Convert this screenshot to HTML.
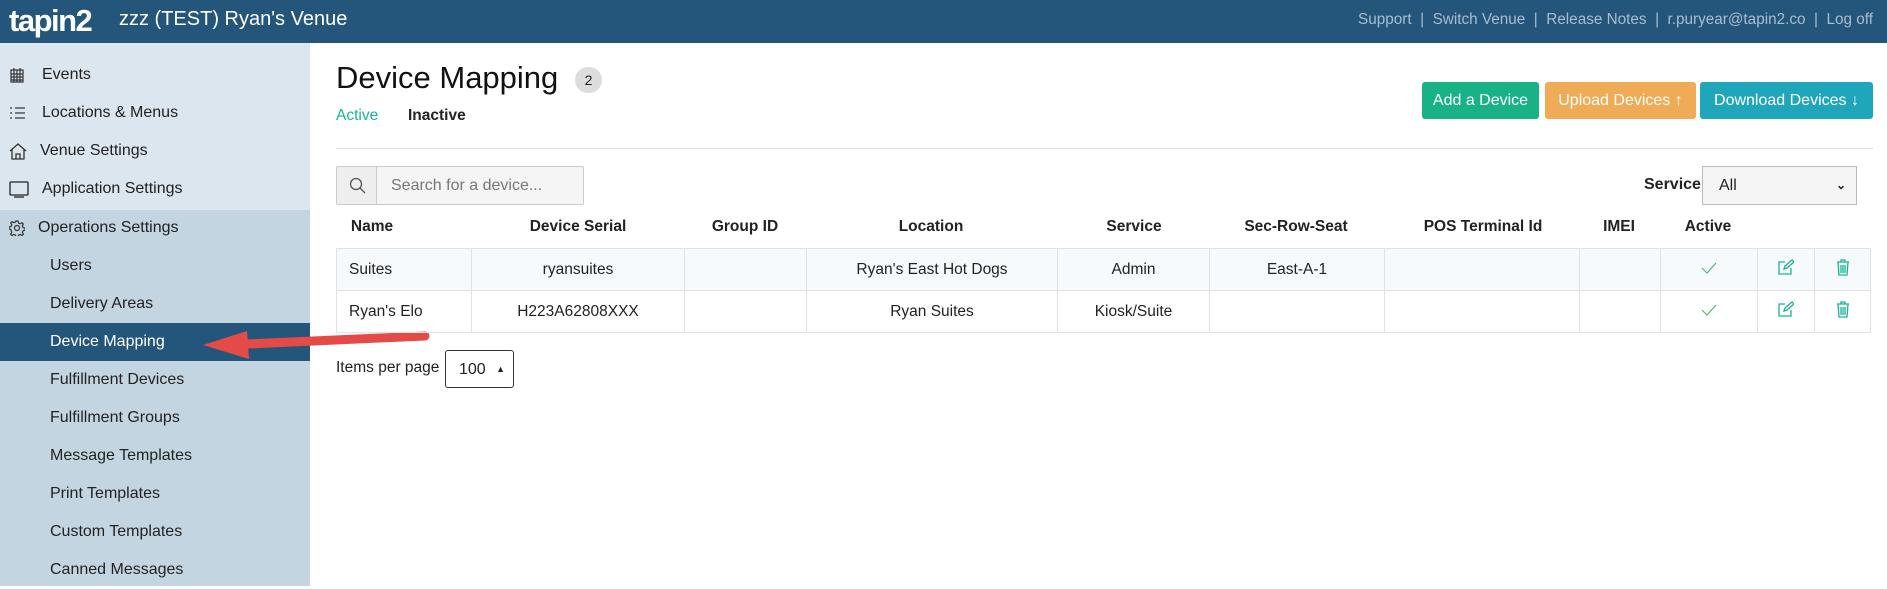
<!DOCTYPE html>
<html><head><meta charset="utf-8"><style>
*{box-sizing:border-box;margin:0;padding:0}
body{width:1887px;height:586px;overflow:hidden;font-family:"Liberation Sans",sans-serif;background:#fff;position:relative;color:#222}
.hdr{position:absolute;left:0;top:0;width:1887px;height:43px;background:#24557a}
.logo{position:absolute;left:9px;top:3px;color:#fff;font-weight:bold;font-size:31px;letter-spacing:-1.5px}
.venue{position:absolute;left:119px;top:8px;color:#fff;font-size:20px}
.links{position:absolute;right:14px;top:11px;color:#a9bdcf;font-size:15.3px}
.side{position:absolute;left:0;top:43px;width:310px;height:543px;background:#dce6ef}
.ops{position:absolute;left:0;top:210px;width:310px;height:376px;background:#c3d5e1}
.it{position:absolute;left:0;width:310px;height:38px;font-size:16px;line-height:38px;color:#222}
.it.sub{padding-left:50px}
.it.act{background:#24557a;color:#fff}
.ic{position:absolute;left:9px;top:11px}
.t{position:absolute;left:336px;top:60px;font-size:31px;color:#111}
.badge{position:absolute;left:575px;top:67px;width:27px;height:26px;border-radius:13px;background:#ddd;font-size:14px;text-align:center;line-height:26px}
.btn{position:absolute;top:82px;height:37px;color:#fff;font-size:16px;line-height:37px;text-align:center;border-radius:3px}
table{position:absolute;left:336px;top:248px;border-collapse:collapse;font-size:15.5px}
td{border:1px solid #e0e3e6;height:42px;text-align:center;color:#222}
.th{position:absolute;top:218px;font-weight:bold;font-size:15.5px;transform:translateX(-50%)}
</style></head><body>
<div class="hdr"><div class="logo">tapin2</div><div class="venue">zzz (TEST) Ryan's Venue</div>
<div class="links">Support &nbsp;|&nbsp; Switch Venue &nbsp;|&nbsp; Release Notes &nbsp;|&nbsp; r.puryear@tapin2.co &nbsp;|&nbsp; Log off</div></div>
<div class="side"></div><div class="ops"></div>
<div class="it" style="top:56px;padding-left:42px">Events<svg class="ic" width="16" height="16" viewBox="0 0 16 16" fill="none" stroke="#333" stroke-width="1.2"><rect x="2" y="3" width="12" height="12"/><path d="M2 7h12M2 10h12M2 13h12M5 3v12M8 3v12M11 3v12M5 1v3M11 1v3"/></svg></div>
<div class="it" style="top:94px;padding-left:42px">Locations &amp; Menus<svg class="ic" width="17" height="16" viewBox="0 0 17 16" fill="none" stroke="#555" stroke-width="1.6"><path d="M1 3h2M1 8h2M1 13h2M6 3h10M6 8h10M6 13h10"/></svg></div>
<div class="it" style="top:132px;padding-left:40px">Venue Settings<svg class="ic" width="18" height="17" viewBox="0 0 18 17" fill="none" stroke="#333" stroke-width="1.3"><path d="M1 8L9 1l8 7M3 6v10h12V6M7 16v-5h4v5"/></svg></div>
<div class="it" style="top:170px;padding-left:42px">Application Settings<svg class="ic" width="20" height="17" viewBox="0 0 20 17" fill="none" stroke="#222" stroke-width="1.3"><rect x="1" y="1" width="18" height="13" rx="1"/><path d="M5 16h10"/></svg></div>
<div class="it" style="top:209px;padding-left:38px">Operations Settings<svg class="ic" width="16" height="16" viewBox="0 0 16 16" fill="none" stroke="#333" stroke-width="1.2"><circle cx="8" cy="8" r="2.5"/><path d="M7 1h2l.5 2 1.7.8 1.8-1.1 1.4 1.4-1.1 1.8.8 1.7 2 .5v2l-2 .5-.8 1.7 1.1 1.8-1.4 1.4-1.800-1.1-1.7.8-.5 2H7l-.5-2-1.7-.8-1.8 1.1-1.4-1.4 1.1-1.8L1.9 9.5 0 9V7l2-.5.8-1.7L1.7 3l1.4-1.4 1.8 1.1L6.5 2z"/></svg></div>
<div class="it sub" style="top:247px">Users</div>
<div class="it sub" style="top:285px">Delivery Areas</div>
<div class="it sub act" style="top:323px">Device Mapping</div>
<div class="it sub" style="top:361px">Fulfillment Devices</div>
<div class="it sub" style="top:399px">Fulfillment Groups</div>
<div class="it sub" style="top:437px">Message Templates</div>
<div class="it sub" style="top:475px">Print Templates</div>
<div class="it sub" style="top:513px">Custom Templates</div>
<div class="it sub" style="top:551px">Canned Messages</div>
<svg style="position:absolute;left:195px;top:325px" width="240" height="40"><path d="M230 11L52 19" stroke="#e44b47" stroke-width="9" stroke-linecap="round"/><path d="M8 20L52 6 54 34z" fill="#e44b47"/></svg>
<div class="t">Device Mapping</div><div class="badge">2</div>
<div style="position:absolute;left:336px;top:107px;font-size:15.5px;color:#1ab394">Active</div>
<div style="position:absolute;left:408px;top:107px;font-size:15.5px;font-weight:bold">Inactive</div>
<div class="btn" style="left:1422px;width:117px;background:#19b287">Add a Device</div>
<div class="btn" style="left:1545px;width:151px;background:#f0ab56">Upload Devices ↑</div>
<div class="btn" style="left:1700px;width:173px;background:#20a6bb">Download Devices ↓</div>
<div style="position:absolute;left:336px;top:148px;width:1537px;height:1px;background:#ddd"></div>
<div style="position:absolute;left:336px;top:166px;width:248px;height:39px;border:1px solid #ccc;background:#f5f5f5;border-radius:2px">
<div style="position:absolute;left:0;top:0;width:40px;height:37px;border-right:1px solid #ccc;background:#eee"><svg style="position:absolute;left:12px;top:10px" width="17" height="17" fill="none" stroke="#555" stroke-width="1.3"><circle cx="7" cy="7" r="5.5"/><path d="M11 11l5 5"/></svg></div>
<div style="position:absolute;left:54px;top:10px;font-size:16px;color:#777">Search for a device...</div></div>
<div style="position:absolute;left:1644px;top:176px;font-weight:bold;font-size:16px">Service</div>
<div style="position:absolute;left:1702px;top:166px;width:155px;height:39px;border:1px solid #bbb;background:#f5f5f5;font-size:16px;line-height:37px;padding-left:16px">All<span style="position:absolute;right:10px;top:0;font-size:12px;font-weight:bold">&#8964;</span></div>
<div class="th" style="left:372px">Name</div><div class="th" style="left:578px">Device Serial</div><div class="th" style="left:745px">Group ID</div><div class="th" style="left:931px">Location</div><div class="th" style="left:1134px">Service</div><div class="th" style="left:1296px">Sec-Row-Seat</div><div class="th" style="left:1483px">POS Terminal Id</div><div class="th" style="left:1619px">IMEI</div><div class="th" style="left:1708px">Active</div>
<table><colgroup><col style="width:135px"><col style="width:213px"><col style="width:122px"><col style="width:251px"><col style="width:152px"><col style="width:175px"><col style="width:195px"><col style="width:81px"><col style="width:97px"><col style="width:57px"><col style="width:56px"></colgroup>
<tr style="background:#f7fafd"><td style="text-align:left;padding-left:12px">Suites</td><td>ryansuites</td><td></td><td>Ryan's East Hot Dogs</td><td>Admin</td><td>East-A-1</td><td></td><td></td><td><svg width="16" height="12" fill="none" stroke="#4cb87a" stroke-width="1.2"><path d="M1 6l5 5 9-10"/></svg></td><td><svg width="16" height="16" fill="none" stroke="#1ab394" stroke-width="1.3"><path d="M13 9v6H1V3h6"/><path d="M6 10l1-3 7-6 2 2-7 6z"/></svg></td><td><svg width="14" height="17" fill="none" stroke="#1ab394" stroke-width="1.3"><path d="M1 3h12M5 3V1h4v2M2 3l1 13h8l1-13M5 6v8M7 6v8M9 6v8"/></svg></td></tr>
<tr><td style="text-align:left;padding-left:12px">Ryan's Elo</td><td>H223A62808XXX</td><td></td><td>Ryan Suites</td><td>Kiosk/Suite</td><td></td><td></td><td></td><td><svg width="16" height="12" fill="none" stroke="#4cb87a" stroke-width="1.2"><path d="M1 6l5 5 9-10"/></svg></td><td><svg width="16" height="16" fill="none" stroke="#1ab394" stroke-width="1.3"><path d="M13 9v6H1V3h6"/><path d="M6 10l1-3 7-6 2 2-7 6z"/></svg></td><td><svg width="14" height="17" fill="none" stroke="#1ab394" stroke-width="1.3"><path d="M1 3h12M5 3V1h4v2M2 3l1 13h8l1-13M5 6v8M7 6v8M9 6v8"/></svg></td></tr>
</table>
<div style="position:absolute;left:336px;top:359px;font-size:15.5px">Items per page</div>
<div style="position:absolute;left:445px;top:350px;width:69px;height:38px;border:1px solid #333;border-radius:3px;font-size:16px;line-height:36px;padding-left:13px">100 <span style="font-size:9px;margin-left:6px;vertical-align:2px">▲</span></div>
</body></html>
